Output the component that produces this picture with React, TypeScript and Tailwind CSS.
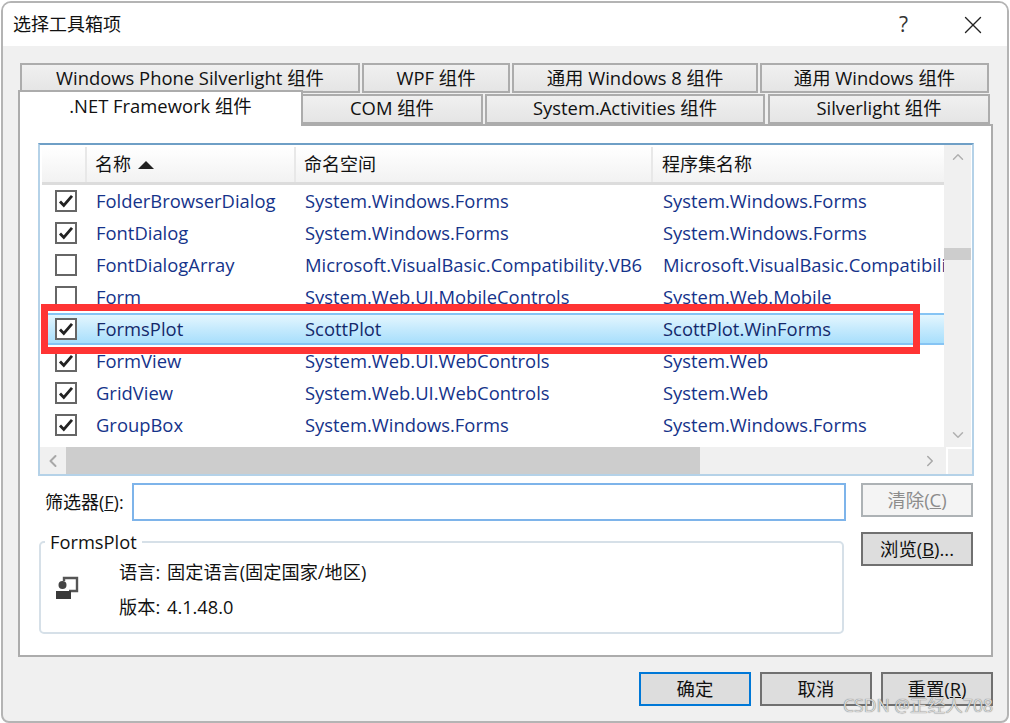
import { ChevronUp, ChevronDown, ChevronLeft, ChevronRight, X } from "lucide-react";

const FONT = "font-['Open_Sans','Noto_Sans_CJK_SC',sans-serif]";

const rows = [
  { name: "FolderBrowserDialog", ns: "System.Windows.Forms", asm: "System.Windows.Forms", checked: true },
  { name: "FontDialog", ns: "System.Windows.Forms", asm: "System.Windows.Forms", checked: true },
  { name: "FontDialogArray", ns: "Microsoft.VisualBasic.Compatibility.VB6", asm: "Microsoft.VisualBasic.Compatibility", checked: false },
  { name: "Form", ns: "System.Web.UI.MobileControls", asm: "System.Web.Mobile", checked: false },
  { name: "FormsPlot", ns: "ScottPlot", asm: "ScottPlot.WinForms", checked: true, selected: true },
  { name: "FormView", ns: "System.Web.UI.WebControls", asm: "System.Web", checked: true },
  { name: "GridView", ns: "System.Web.UI.WebControls", asm: "System.Web", checked: true },
  { name: "GroupBox", ns: "System.Windows.Forms", asm: "System.Windows.Forms", checked: true },
];

function Tab({ label, className }: { label: string; className: string }) {
  return (
    <div className={`flex items-center justify-center border-2 border-[#acacac] bg-gradient-to-b from-[#f0f0f0] to-[#e5e5e5] text-[18.4px] text-[#111] whitespace-nowrap ${className}`}>
      {label}
    </div>
  );
}

function Check({ checked }: { checked: boolean }) {
  return (
    <div className="w-[22px] h-[22px] border-2 border-[#666] bg-white flex items-center justify-center shrink-0">
      {checked && (
        <svg width="18" height="18" viewBox="0 0 18 18" fill="none">
          <path d="M3 9.5l3.8 4L15 3.8" stroke="#222" strokeWidth="2.8" />
        </svg>
      )}
    </div>
  );
}

function Button({ label, className }: { label: React.ReactNode; className: string }) {
  return (
    <div className={`w-[112px] h-[34px] flex items-center justify-center border-2 text-[18.4px] ${className}`}>
      {label}
    </div>
  );
}

export default function App() {
  return (
    <div className={`relative w-[1010px] h-[723px] overflow-hidden bg-white ${FONT}`}>
      <div className="w-[1008px] h-[722px] ml-px mt-px flex flex-col rounded-t-[10px] rounded-b-[8px] border-2 border-[#b4b4b4] bg-[#f0f0f0] overflow-hidden">
        {/* title bar */}
        <div className="h-[43px] shrink-0 bg-white flex items-center pl-[10px] text-[18px] text-[#111]">
          <span className="flex-1">选择工具箱项</span>
          <span className="mr-[50px] text-[21px] text-[#333]">?</span>
          <X size={30} strokeWidth={1.1} className="mr-[19px] text-[#222]" />
        </div>

        {/* tabs */}
        <div className="pl-[17px] pt-[17px] flex gap-[2px] h-[48px] shrink-0">
          <Tab label="Windows Phone Silverlight 组件" className="w-[340px] h-[30px]" />
          <Tab label="WPF 组件" className="w-[148px] h-[30px]" />
          <Tab label="通用 Windows 8 组件" className="w-[246px] h-[30px]" />
          <Tab label="通用 Windows 组件" className="w-[229px] h-[30px]" />
        </div>
        <div className="pl-[15px] flex h-[33px] shrink-0 -mt-[3px] relative z-10 items-end">
          <div className="w-[285px] h-[36px] -mb-[2px] pb-[6px] border-2 border-b-0 border-[#acacac] bg-white flex items-center justify-center text-[18.4px] text-[#111]">
            .NET Framework 组件
          </div>
          <Tab label="COM 组件" className="w-[180px] h-[30px] pb-[2px] border-l-0" />
          <Tab label="System.Activities 组件" className="w-[280px] h-[30px] pb-[2px] ml-[2px]" />
          <Tab label="Silverlight 组件" className="w-[222px] h-[30px] pb-[2px] ml-[3px]" />
        </div>

        {/* main panel */}
        <div className="relative mx-[15px] w-[975px] h-[533px] border-2 border-[#acacac] bg-white pt-[17px] pl-[18px]">
          {/* list */}
          <div className="w-[936px] h-[333px] border-2 border-[#b5d2e8] border-t-[#6f9fc6] flex flex-col">
            <div className="flex h-[302px] shrink-0">
              <div className="w-[904px] pl-[2px] flex flex-col overflow-hidden">
                <div className="h-[38px] shrink-0 mt-[2px] flex border-b-[3px] border-[#dcdcdc] bg-gradient-to-b from-white to-[#f2f2f2] text-[18px] text-[#111]">
                  <div className="w-[45px] border-r-2 border-[#e8e8e8]" />
                  <div className="w-[209px] border-r-2 border-[#e8e8e8] pl-[8px] flex items-center gap-[7px]">
                    名称
                    <svg width="16" height="8" viewBox="0 0 16 8"><path d="M0 8L8 0l8 8z" fill="#222" /></svg>
                  </div>
                  <div className="w-[357px] border-r-2 border-[#e8e8e8] pl-[8px] flex items-center">命名空间</div>
                  <div className="pl-[9px] flex items-center">程序集名称</div>
                </div>
                {rows.map((r) => (
                  <div
                    key={r.name}
                    className={`h-[32px] shrink-0 flex items-center text-[18.4px] whitespace-nowrap ${
                      r.selected
                        ? "border-y-2 border-[#86c4f4] bg-gradient-to-b from-[#e4f6fe] via-[#c5eafd] to-[#a8dffc] text-[#14296b]"
                        : "text-[#15338a]"
                    }`}
                  >
                    <div className="w-[54px] pl-[13px] shrink-0"><Check checked={r.checked} /></div>
                    <div className="w-[209px] shrink-0">{r.name}</div>
                    <div className="w-[358px] shrink-0">{r.ns}</div>
                    <div className="flex-1 overflow-hidden">{r.asm}</div>
                  </div>
                ))}
              </div>
              {/* vertical scrollbar */}
              <div className="w-[27px] bg-[#f0f0f0] flex flex-col items-center text-[#b0b0b0]">
                <ChevronUp size={18} className="mt-[3px]" />
                <div className="w-full h-[12px] mt-[82px] bg-[#cdcdcd]" />
                <ChevronDown size={18} className="mt-auto mb-[3px]" />
              </div>
            </div>
            {/* horizontal scrollbar */}
            <div className="flex-1 flex bg-[#f0f0f0] text-[#a8a8a8]">
              <div className="w-[26px] flex items-center justify-center"><ChevronLeft size={20} strokeWidth={2.4} /></div>
              <div className="w-[634px] bg-[#cdcdcd]" />
              <div className="w-[246px] flex items-center justify-end pr-[7px]"><ChevronRight size={18} /></div>
              <div className="flex-1 border-l-2 border-t-2 border-white" />
            </div>
          </div>

          {/* filter */}
          <div className="flex items-start mt-[7px] -ml-[18px]">
            <div className="w-[112px] pl-[25px] h-[38px] flex items-center text-[18px] text-[#111] shrink-0 whitespace-nowrap">
              <span>筛选器(<u>F</u>):</span>
            </div>
            <div className="w-[714px] h-[38px] border-2 border-[#7eb4ea] bg-white shrink-0" />
            <Button label={<span>清除(<u>C</u>)</span>} className="ml-[15px] border-[#adb2b5] bg-[#f4f4f4] text-[#8c8c8c]" />
          </div>

          {/* details + browse */}
          <div className="flex items-start mt-[11px] -ml-[18px]">
            <div className="relative ml-[19px] w-[805px] h-[93px] mt-[9px] border-2 border-[#d6e0e8] rounded-[5px] shrink-0">
              <div className="absolute -top-[15px] left-[4px] px-[5px] bg-white text-[18.3px] text-[#111]">FormsPlot</div>
              <div className="flex items-center h-full">
                <svg width="24" height="23" viewBox="0 0 24 23" className="ml-[15px]" fill="none">
                  <path d="M8 5V2h13v13h-8" stroke="#555" strokeWidth="2.4" />
                  <circle cx="6.5" cy="9" r="4" fill="#444" />
                  <path d="M0 15h15v8H0z" fill="#3a3a3a" />
                </svg>
                <div className="ml-[39px] mt-[5px] flex flex-col gap-[7px] text-[18.2px] text-[#111]">
                  <div className="flex"><span className="w-[48px]">语言:</span><span>固定语言(固定国家/地区)</span></div>
                  <div className="flex"><span className="w-[48px]">版本:</span><span>4.1.48.0</span></div>
                </div>
              </div>
            </div>
            <Button label={<span>浏览(<u>B</u>)...</span>} className="ml-[17px] border-[#707070] bg-[#dddddd] text-[#111]" />
          </div>
        </div>

        {/* dialog buttons */}
        <div className="flex justify-end gap-[9px] mt-[15px] mr-[14px] text-[#111]">
          <Button label="确定" className="border-[#0078d7] bg-[#dddddd]" />
          <Button label="取消" className="border-[#707070] bg-[#dddddd]" />
          <Button label={<span>重置(<u>R</u>)</span>} className="border-[#707070] bg-[#dddddd]" />
        </div>
      </div>

      {/* red annotation */}
      <div className="absolute left-[41px] top-[304px] w-[879px] h-[50px] border-[7px] border-[#ff3434]" />
      {/* watermark */}
      <div className="absolute left-[843px] top-[692px] text-[17.6px] text-[#d8d8d8] whitespace-nowrap [text-shadow:0_0_1px_#555]">CSDN @正经人708</div>
    </div>
  );
}
